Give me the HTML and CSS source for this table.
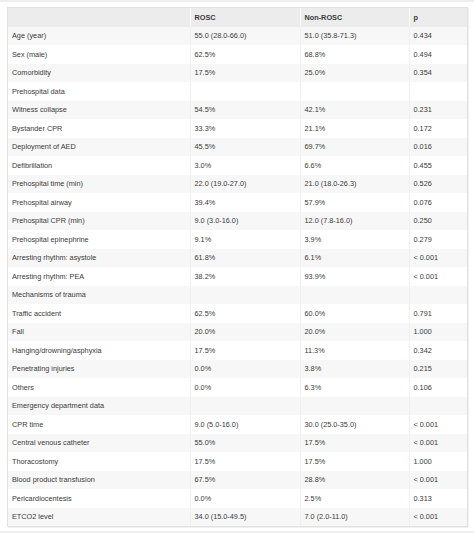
FILE: index.html
```html
<!DOCTYPE html>
<html>
<head>
<meta charset="utf-8">
<link rel="stylesheet" href="styles.css">
</head>
<body>
<div class="rule"></div>
<div class="card">
<table class="data">
<colgroup><col class="c1"><col class="c2"><col class="c3"><col class="c4"></colgroup>
<thead>
<tr><th></th><th>ROSC</th><th>Non-ROSC</th><th>p</th></tr>
</thead>
<tbody>
<tr><td>Age (year)</td><td>55.0 (28.0-66.0)</td><td>51.0 (35.8-71.3)</td><td>0.434</td></tr>
<tr><td>Sex (male)</td><td>62.5%</td><td>68.8%</td><td>0.494</td></tr>
<tr><td>Comorbidity</td><td>17.5%</td><td>25.0%</td><td>0.354</td></tr>
<tr><td>Prehospital data</td><td></td><td></td><td></td></tr>
<tr><td>Witness collapse</td><td>54.5%</td><td>42.1%</td><td>0.231</td></tr>
<tr><td>Bystander CPR</td><td>33.3%</td><td>21.1%</td><td>0.172</td></tr>
<tr><td>Deployment of AED</td><td>45.5%</td><td>69.7%</td><td>0.016</td></tr>
<tr><td>Defibrillation</td><td>3.0%</td><td>6.6%</td><td>0.455</td></tr>
<tr><td>Prehospital time (min)</td><td>22.0 (19.0-27.0)</td><td>21.0 (18.0-26.3)</td><td>0.526</td></tr>
<tr><td>Prehospital airway</td><td>39.4%</td><td>57.9%</td><td>0.076</td></tr>
<tr><td>Prehospital CPR (min)</td><td>9.0 (3.0-16.0)</td><td>12.0 (7.8-16.0)</td><td>0.250</td></tr>
<tr><td>Prehospital epinephrine</td><td>9.1%</td><td>3.9%</td><td>0.279</td></tr>
<tr><td>Arresting rhythm: asystole</td><td>61.8%</td><td>6.1%</td><td>&lt; 0.001</td></tr>
<tr><td>Arresting rhythm: PEA</td><td>38.2%</td><td>93.9%</td><td>&lt; 0.001</td></tr>
<tr><td>Mechanisms of trauma</td><td></td><td></td><td></td></tr>
<tr><td>Traffic accident</td><td>62.5%</td><td>60.0%</td><td>0.791</td></tr>
<tr><td>Fall</td><td>20.0%</td><td>20.0%</td><td>1.000</td></tr>
<tr><td>Hanging/drowning/asphyxia</td><td>17.5%</td><td>11.3%</td><td>0.342</td></tr>
<tr><td>Penetrating injuries</td><td>0.0%</td><td>3.8%</td><td>0.215</td></tr>
<tr><td>Others</td><td>0.0%</td><td>6.3%</td><td>0.106</td></tr>
<tr><td>Emergency department data</td><td></td><td></td><td></td></tr>
<tr><td>CPR time</td><td>9.0 (5.0-16.0)</td><td>30.0 (25.0-35.0)</td><td>&lt; 0.001</td></tr>
<tr><td>Central venous catheter</td><td>55.0%</td><td>17.5%</td><td>&lt; 0.001</td></tr>
<tr><td>Thoracostomy</td><td>17.5%</td><td>17.5%</td><td>1.000</td></tr>
<tr><td>Blood product transfusion</td><td>67.5%</td><td>28.8%</td><td>&lt; 0.001</td></tr>
<tr><td>Pericardiocentesis</td><td>0.0%</td><td>2.5%</td><td>0.313</td></tr>
<tr><td>ETCO2 level</td><td>34.0 (15.0-49.5)</td><td>7.0 (2.0-11.0)</td><td>&lt; 0.001</td></tr>
</tbody>
</table>
</div>
<div class="rule bottom"></div>
</body>
</html>
```
FILE: styles.css
```css
html, body {
  margin: 0;
  padding: 0;
  background: #fff;
}
body {
  font-family: "Liberation Sans", Arial, sans-serif;
  color: #3a3a3a;
  width: 474px;
}
.rule {
  height: 2px;
  background: #eeeeee;
}
.rule.bottom {
  margin-top: 4px;
}
.card {
  margin: 5px 6px 0 7px;
  border: 1px solid #e2e2e2;
  box-shadow: 1px 1px 0 #f0f0f0;
}
.data {
  width: 100%;
  border-collapse: collapse;
  table-layout: fixed;
  font-size: 7.3px;
}
.c1 { width: 182px; }
.c2 { width: 110px; }
.c3 { width: 109px; }
.c4 { width: auto; }
.data th,
.data td {
  height: 18.5px;
  padding: 0 4px;
  text-align: left;
  vertical-align: middle;
  white-space: nowrap;
  border-left: 1px solid #f0f0f0;
  box-sizing: border-box;
}
.data th {
  border-left-color: #fafafa;
}
.data th:first-child,
.data td:first-child {
  border-left: none;
}
.data th {
  font-weight: bold;
  background: #ececec;
}
.data tbody tr:nth-child(odd) td {
  background: #f7f7f7;
}
```
